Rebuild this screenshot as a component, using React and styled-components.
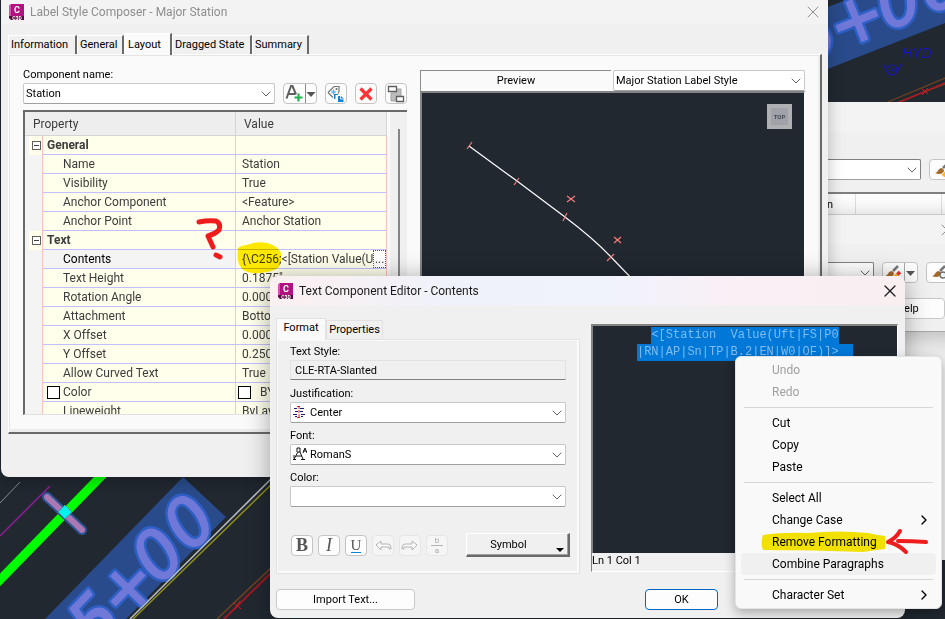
import React from "react";
import styled, { createGlobalStyle, css } from "styled-components";
import { ChevronDown, ChevronRight, X } from "lucide-react";

const GlobalStyle = createGlobalStyle`
  * {
    box-sizing: border-box;
  }

  body {
    margin: 0;
    background: #212830;
    color: #000;
    font-family: Roboto, "Noto Sans", sans-serif;
    font-size: 11px;
    line-height: 16px;
  }

  button, input, select {
    font: inherit;
    color: inherit;
    margin: 0;
  }
`;

const Desktop = styled.main`
  position: relative;
  min-height: 100vh;
  overflow: hidden;
`;

const Drawing = styled.svg`
  position: absolute;
  top: 0;
  left: 0;
  width: 100%;
  height: 100%;
`;

const Ink = styled(Drawing)`
  pointer-events: none;
  mix-blend-mode: ${(p) => (p.$marker ? "multiply" : "normal")};
`;

const Window = styled.section`
  position: absolute; // windows float freely on the desktop
  display: flex;
  flex-direction: column;
  background: #f0f0f0;
  overflow: hidden;
`;

const ComposerWindow = styled(Window)`
  top: 0;
  left: 1px;
  width: 827px;
  height: 477px;
  border-radius: 0 0 8px 8px;
  box-shadow: 0 4px 16px rgba(0, 0, 0, 0.25);
`;

const StylesWindow = styled(Window)`
  top: 102px;
  left: 720px;
  width: 320px;
  height: 458px;
`;

const PickerWindow = styled(Window)`
  top: 214px;
  left: 720px;
  width: 320px;
  height: 118px;
  border-top: 1px solid #c8c8c8;
  border-bottom: 1px solid #a8a8a8;
  box-shadow: 0 4px 24px rgba(0, 0, 0, 0.25);
`;

const EditorWindow = styled(Window)`
  top: 276px;
  left: 270px;
  width: 635px;
  height: 342px;
  border-radius: 8px;
  box-shadow: 0 2px 24px rgba(0, 0, 0, 0.35);
`;

const TitleBar = styled.header`
  display: flex;
  align-items: center;
  flex: none;
  height: ${(p) => p.$height || 30}px;
  padding: 0 5px 0 8px;
  gap: 6px;
  background: ${(p) => p.$background || "#f3f3f3"};
  color: ${(p) => (p.$active ? "#1b1b1b" : "#8e8e8e")};

  h1 {
    flex: 1;
    margin: 0;
    font-size: 12px;
    font-weight: 400;
  }
`;

const CloseButton = styled.button`
  display: flex;
  padding: 0;
  border: 0;
  background: none;
`;

const TabList = styled.div`
  display: flex;
  align-items: flex-end;
  position: relative;
  z-index: 1;
`;

const Tab = styled.button`
  height: 19px;
  padding: 0 2px;
  border: solid #fff;
  border-width: 1px 0 0 1px;
  border-right: 2px solid #696969;
  background: #f0f0f0;
  white-space: nowrap;
  text-align: left;
  width: ${(p) => p.$width}px;

  ${(p) =>
    p.$selected &&
    css`
      height: 22px;
      margin-bottom: -1px;
      padding-left: 3px;
      background: #fafafa;
    `}
`;

const FlatTab = styled(Tab)`
  padding: 0 0 ${(p) => (p.$selected ? 4 : 0)}px;
  border: 1px solid #e2e2e2;
  border-bottom: 0;
  text-align: center;
  background: ${(p) => (p.$selected ? "#fafafa" : "#f0f0f0")};
`;

const ComposerBody = styled.div`
  display: flex;
  flex-direction: column;
  flex: 1;
  min-height: 0;
  padding: 9px 6px 43px 7px;
`;

const ComposerPanel = styled.div`
  display: flex;
  flex: 1;
  min-height: 0;
  gap: 13px;
  padding: 12px 15px 17px 14px;
  background: #fafafa;
  border: 2px solid #696969;
  border-top: 1px solid #fff;
  border-left: 1px solid #fff;
  box-shadow: inset -2px -3px 0 #ececec, inset 1px 1px 0 #e4e4e4;
`;

const PropertyPane = styled.div`
  display: flex;
  flex-direction: column;
  width: 384px;
  min-height: 0;
`;

const Toolbar = styled.div`
  display: flex;
  align-items: center;
  gap: 8px;
  margin-bottom: 6px;
`;

const SelectBox = styled.span`
  position: relative;
  display: flex;
  flex: ${(p) => (p.$width ? "none" : 1)};
  width: ${(p) => (p.$width ? p.$width + "px" : "auto")};

  select {
    appearance: none;
    width: 100%;
    height: 21px;
    padding: 0 20px 0 ${(p) => p.$indent || 2}px;
    border: 1px solid ${(p) => p.$border || "#c8c8c8"};
    border-bottom-color: #a0a0a0;
    border-radius: 2px;
    background: #fff;
  }

  svg.chevron {
    position: absolute;
    right: 1px;
    top: 3px;
    pointer-events: none;
  }

  svg.lead {
    position: absolute;
    left: 3px;
    top: 3px;
  }
`;

const ToolButton = styled.button`
  display: flex;
  align-items: center;
  justify-content: center;
  flex: none;
  width: ${(p) => p.$width || 22}px;
  height: 21px;
  padding: 0;
  border: 1px solid ${(p) => (p.disabled ? "#e6e6e6" : "#c4c4c4")};
  border-radius: 4px;
  background: ${(p) => (p.disabled ? "#f5f5f5" : "#fdfdfd")};
`;

const GridFrame = styled.div`
  display: flex;
  flex: 1;
  min-height: 0;
  overflow: hidden;
  border: solid #696969;
  border-width: 2px 0 0 2px;
  border-bottom: 1px solid #e0e0e0;
  background: #fafafa;
`;

const Properties = styled.table`
  flex: none;
  align-self: flex-start;
  width: 362px;
  table-layout: fixed;
  border-collapse: separate;
  border-spacing: 0;
  font-size: 12px;
  color: #3c3c3c;

  th, td {
    height: 19px;
    padding: 0 0 0 6px;
    text-align: left;
    white-space: nowrap;
    font-weight: 400;
    line-height: 18px;
  }

  thead th {
    height: 24px;
    padding-left: 8px;
    background: #eee;
    border-right: 1px solid #d4d4d4;
    border-bottom: 1px solid #d4d4d4;
  }

  tbody th, tbody td {
    background: #ffffeb;
    border-right: 1px solid #ffc0c0;
    border-bottom: 1px solid #c0c0ff;
  }

  tbody th {
    padding-left: 20px;
  }
`;

const Row = styled.tr`
  && td:first-child {
    padding: 0 0 0 7px;
    border-bottom: 0;
    background: ${(p) => (p.$group ? "linear-gradient(90deg, #f4f4f4 4px, #ffffeb 4px)" : "#f4f4f4")};
  }

  ${(p) =>
    p.$group &&
    css`
      && th {
        padding-left: 4px;
        font-weight: 700;
      }
    `}

  ${(p) =>
    p.$current &&
    css`
      && th {
        background: #f4f4f4;
        color: #000;
      }
    `}
`;

const Collapse = styled.button`
  display: flex;
  align-items: center;
  justify-content: center;
  width: 9px;
  height: 9px;
  padding: 0;
  border: 1px solid #606060;
  background: #fff;

  &::before {
    content: "";
    width: 5px;
    height: 1px;
    background: #404040;
  }
`;

const Swatch = styled.span`
  display: inline-block;
  width: 13px;
  height: 13px;
  margin: 0 ${(p) => p.$gap || 3}px 0 ${(p) => (p.$gap ? -4 : -16)}px;
  border: 1px solid #000;
  background: #fff;
  vertical-align: middle;
`;

const ValueBox = styled.span`
  display: flex;
  justify-content: space-between;
`;

const MoreButton = styled.button`
  width: 17px;
  padding: 0;
  border: 1px dotted #555;
  background: #fff;
  line-height: 12px;
`;

const ScrollTrack = styled.div`
  flex: 1;
  padding: 17px 0 0 8px;
  margin-left: 3px;
  background: #f0f0f0;

  &::before {
    content: "";
    display: block;
    width: 2px;
    height: 100%;
    background: #858585;
  }
`;

const PreviewPane = styled.div`
  display: flex;
  flex-direction: column;
  flex: 1;
  padding-top: 3px;
`;

const PreviewHead = styled.div`
  display: flex;
  gap: 2px;
`;

const PreviewLabel = styled.div`
  flex: 1;
  border: solid #8c8c8c;
  border-width: 1px 0 0 1px;
  text-align: center;
  line-height: 20px;
`;

const Viewport = styled.div`
  position: relative;
  flex: 1;
  background: #212830;
  border: 2px solid #848484;
  border-right: 1px solid #fff;
  border-bottom: 1px solid #fff;
`;

const ViewCube = styled.button`
  position: absolute;
  top: 11px;
  right: 12px;
  width: 25px;
  height: 25px;
  padding: 0;
  border: 4px solid #aeb0b3;
  background: #9fa3a9;
  color: #454a52;
  font-size: 6px;
  font-weight: 700;
  line-height: 16px;
`;

const WhiteRow = styled.div`
  display: flex;
  height: 22px;
  border-top: 2px solid #808080;
  background: #fff;

  span {
    border-right: 1px solid #e0e0e0;
    line-height: 22px;
    text-align: right;
  }
`;

const BackRow = styled.div`
  display: flex;
  align-items: center;
  gap: 8px;
  padding: ${(p) => p.$pad};
`;

const PlainButton = styled.button`
  width: ${(p) => p.$width}px;
  height: 21px;
  padding: 0;
  border: 1px solid ${(p) => (p.$primary ? "#0067c0" : "#c8c8c8")};
  border-radius: 4px;
  background: #fdfdfd;
`;

const EditorBody = styled.div`
  display: grid;
  grid-template-columns: 304px 1fr;
  grid-template-rows: auto auto;
  column-gap: 11px;
  row-gap: 15px;
  padding: 12px 7px 9px 6px;
`;

const FormatPane = styled.div`
  display: flex;
  flex-direction: column;
`;

const FormatPanel = styled.div`
  display: flex;
  flex-direction: column;
  height: 235px;
  padding: 4px 13px 0 13px;
  border: 1px solid #e2e2e2;
  box-shadow: inset 1px 1px 0 #fafafa, inset -2px -2px 0 #fafafa;
`;

const Field = styled.div`
  display: flex;
  flex-direction: column;
  height: 42px;

  input {
    height: 20px;
    padding: 0 4px;
    border: 1px solid #e2e2e2;
    border-bottom-color: #808080;
    background: #f0f0f0;
  }
`;

const FormatTools = styled.div`
  display: flex;
  align-items: center;
  gap: 5px;
  margin: 21px 0 0 1px;
`;

const Glyph = styled.span`
  font-family: "Liberation Serif", serif;
  font-size: 18px;
  line-height: 18px;
  color: #555;
  font-weight: ${(p) => (p.$bold ? 700 : 400)};
  font-style: ${(p) => (p.$italic ? "italic" : "normal")};
`;

const UnderGlyph = styled(Glyph)`
  font-size: 15px;
  line-height: 14px;
  border-bottom: 1px solid #0a84d8;
`;

const Fraction = styled.span`
  display: flex;
  flex-direction: column;
  font-size: 8px;
  line-height: 9px;
  color: #a8a8a8;

  b {
    font-weight: 400;
    width: 12px;
    border-bottom: 1px solid #b4b4b4;
  }
`;

const SymbolButton = styled.button`
  position: relative;
  flex: 1;
  height: 24px;
  margin: 0 -4px 0 13px;
  padding: 0 18px 0 0;
  border: 2px solid #696969;
  border-top: 1px solid #fff;
  border-left: 1px solid #fff;
  background: #f0f0f0;
  box-shadow: inset -1px -1px 0 #a0a0a0;

  &::after {
    content: "";
    position: absolute;
    right: 4px;
    bottom: 3px;
    border: 4px solid transparent;
    border-top-color: #000;
    border-bottom: 0;
  }
`;

const TextPane = styled.div`
  display: flex;
  flex-direction: column;
  padding-top: 6px;
`;

const TextArea = styled.div`
  height: 229px;
  border: 2px solid #848484;
  border-right: 1px solid #fff;
  border-bottom: 0;
  background: #212830;
  color: #7fbcf2;
  font-family: "Liberation Mono", monospace;
  font-size: 12px;
  line-height: 17px;
  text-align: center;
  white-space: pre;
  padding-top: 1px;

  span {
    background: #0078d7;
    display: inline-block;
  }
`;

const Status = styled.div`
  height: 19px;
  border-left: 1px solid #808080;
  border-bottom: 1px solid #fff;
`;

const Menu = styled.div`
  position: absolute;
  top: 356px;
  left: 735px;
  width: 207px;
  padding: 2px 5px;
  border: 1px solid #e4e4e4;
  border-radius: 6px;
  background: #f9f9f9;
  box-shadow: 0 4px 12px rgba(0, 0, 0, 0.3);
  font-size: 12px;

  hr {
    height: 1px;
    margin: 4px 3px;
    border: 0;
    background: #d7d7d7;
  }
`;

const MenuItem = styled.button`
  display: flex;
  align-items: center;
  justify-content: space-between;
  width: 100%;
  height: 22px;
  padding: 0 4px 0 31px;
  border: 0;
  border-radius: 4px;
  background: ${(p) => (p.$hover ? "#f0f0f0" : "none")};
  white-space: nowrap;

  &:disabled {
    color: #a0a0a0;
  }
`;

const PROPERTIES = [
  { name: "General", group: true },
  { name: "Name", value: "Station" },
  { name: "Visibility", value: "True" },
  { name: "Anchor Component", value: "<Feature>" },
  { name: "Anchor Point", value: "Anchor Station" },
  { name: "Text", group: true },
  { name: "Contents", value: "{\\C256;<[Station Value(U...", current: true },
  { name: "Text Height", value: '0.1875"' },
  { name: "Rotation Angle", value: "0.0000 (d)" },
  { name: "Attachment", value: "Bottom center" },
  { name: "X Offset", value: '0.0000"' },
  { name: "Y Offset", value: '0.2500"' },
  { name: "Allow Curved Text", value: "True" },
  { name: "Color", value: "BYLAYER", swatch: true },
  { name: "Lineweight", value: "ByLayer" },
];

const MENU = [
  [{ text: "Undo", disabled: true }, { text: "Redo", disabled: true }],
  [{ text: "Cut" }, { text: "Copy" }, { text: "Paste" }],
  [
    { text: "Select All" },
    { text: "Change Case", more: true },
    { text: "Remove Formatting" },
    { text: "Combine Paragraphs", hover: true },
  ],
  [{ text: "Character Set", more: true }],
];

const AppIcon = () => (
  <svg width="15" height="17" viewBox="0 0 15 17" aria-hidden="true">
    <path d="M0 2l2-2h13v12H0z" fill="#b0127f" />
    <path d="M0 2l2-2v12H0z" fill="#e04bb4" />
    <path d="M0 12h15v4H2l-2-2z" fill="#5c0843" />
    <text x="8" y="9" fontSize="9" fontWeight="700" fill="#fff" textAnchor="middle">C</text>
    <text x="8" y="16" fontSize="5" fontWeight="700" fill="#fff" textAnchor="middle">C3D</text>
  </svg>
);

const AddTextIcon = () => (
  <svg width="32" height="19" viewBox="0 0 32 19" aria-hidden="true">
    <path d="M2.500 14.500L7 2h1.500l3.500 8.500M4.500 10h6.500" fill="none" stroke="#5f5f5f" strokeWidth="2" />
    <path d="M14.500 9.500v8M10.500 13.500h8" stroke="#22b14c" strokeWidth="2.200" />
    <path d="M21.500 0v19" stroke="#8a8a8a" />
    <path d="M22.500 8h9l-4.500 5z" fill="#555" />
  </svg>
);

const TagIcon = () => (
  <svg width="18" height="17" viewBox="0 0 18 17" aria-hidden="true">
    <path d="M1 7.500L7 1.500h5v5l-1 2M1 7.500l5 5" fill="none" stroke="#777" strokeWidth="1.200" />
    <circle cx="9.500" cy="4" r="1" fill="#666" />
    <path d="M4 7h5M6.500 4.500v5M5 5.500l3 3M8 5.500l-3 3" stroke="#4db2ee" />
    <path d="M7 9h4v1H8.500v4H7zM11 11h3l2.500 2.500V17H11z" fill="#1183d6" />
    <path d="M13.500 11v3h3" fill="none" stroke="#fff" strokeWidth="0.800" />
  </svg>
);

const DeleteIcon = () => (
  <svg width="16" height="16" viewBox="0 0 16 16" aria-hidden="true">
    <path d="M2.500 2.500l11 11M13.500 2.500l-11 11" stroke="#fb3535" strokeWidth="3.200" />
  </svg>
);

const ArrangeIcon = () => (
  <svg width="18" height="18" viewBox="0 0 18 18" aria-hidden="true">
    <path d="M8 4h6v8H9v4H4V8h4z" fill="#bdbdbd" stroke="#a4a4a4" />
    <path d="M1.500 1.500h8v5h-8zM9.500 11.500h7v5h-7z" fill="#fff" stroke="#5f5f5f" strokeWidth="1.300" />
  </svg>
);

const BrushIcon = ({ lens, arrow }) => (
  <svg width={arrow ? 34 : 20} height="19" viewBox={arrow ? "0 0 34 19" : "0 0 20 19"} aria-hidden="true">
    <path d="M2 13c3 0 3-5 7-5l2 2c0 4-5 5-9 3z" fill="#a46a2c" />
    <path d="M10 8l5-5" stroke="#777" strokeWidth="2.500" />
    {lens ? (
      <g fill="#e8f2f4" stroke="#6b6b6b" strokeWidth="1.300">
        <circle cx="13" cy="12" r="3" />
        <path d="M15 14l4 4" />
      </g>
    ) : (
      <path d="M10 16l5-5" stroke="#f5b52e" strokeWidth="3.500" />
    )}
    {!lens && <path d="M14.500 11.500l2.500-2.500" stroke="#ee3038" strokeWidth="3.500" />}
    {arrow && <path d="M21.500 0v19" stroke="#aaa" />}
    {arrow && <path d="M23 8h9l-4.500 5z" fill="#555" />}
  </svg>
);

const JustifyIcon = () => (
  <svg className="lead" width="12" height="14" viewBox="0 0 12 14" aria-hidden="true">
    <path d="M1 3.500h3M7 3.500h4M2 6.500h3M7 6.500h3M0 9.500h4M8 9.500h4M2 11.500h2M8 11.500h2" stroke="#1b1b70" />
    <path d="M6 1v12M4 1.500h4M4 12.500h4" stroke="#f02020" strokeDasharray="3 1" />
  </svg>
);

const FontIcon = () => (
  <svg className="lead" width="14" height="14" viewBox="0 0 14 14" aria-hidden="true">
    <path d="M1 12l4-7h2l3 7M3 9h6M0 12.500h3M8 12.500h4M4 5V1h3v4M10 6l2-5 2 5M10 4h3M1 8v3" fill="none" stroke="#111" />
  </svg>
);

const HistoryIcon = ({ redo }) => (
  <svg width="18" height="12" viewBox="0 0 18 12" aria-hidden="true">
    <path
      d={redo ? "M16 6l-5-4v3H4q-3 0-3 4v1h2V8h8v3z" : "M2 6l5-4v3h7q3 0 3 4v1h-2V8H7v3z"}
      fill="#fafafa"
      stroke="#b4b4b4"
    />
  </svg>
);

const Combo = ({ label, id, value, width, indent, border, children }) => (
  <SelectBox $width={width} $indent={indent} $border={border}>
    <select id={id} aria-label={label} defaultValue={value}>
      <option>{value}</option>
    </select>
    {children}
    <ChevronDown className="chevron" size={16} strokeWidth={1.5} color="#666" />
  </SelectBox>
);

const LABEL_PASSES = [
  { color: "#2d5fc4", width: 7 },
  { color: "#7078d8", width: 2 },
];

const StationLabel = ({ transform }) => (
  <g transform={transform} fontFamily="DejaVu Sans" fontStyle="italic" fontSize="66" textAnchor="middle">
    {LABEL_PASSES.map((pass) => (
      <text
        key={pass.color}
        x="0 46 91 136"
        fill={pass.color}
        stroke={pass.color}
        strokeWidth={pass.width}
        strokeLinejoin="round"
      >
        5+00
      </text>
    ))}
  </g>
);

// Plan drawing that stays visible around the open windows
const PlanDrawing = () => (
  <Drawing aria-hidden="true">
    <path d="M0 503L20 482" stroke="#8a8f96" />
    <path d="M0 536L50 486" stroke="#8c1c98" strokeWidth="1.500" />
    <path d="M-5 585L110 467" stroke="#0f0" strokeWidth="9" />
    <path d="M47 497L82 530" stroke="#2c5596" strokeWidth="10" strokeLinecap="round" />
    <path d="M47 497L82 530" stroke="#ab78b4" strokeWidth="6" strokeLinecap="round" />
    <path d="M65 505l7 7-7 7-7-7z" fill="#00f0f0" stroke="#478b8b" />
    <path d="M45 619L183 477L226 517L126 619z" fill="#294b8b" />
    <StationLabel transform="translate(111 636) rotate(-46)" />
    <path d="M130 619L272 478" stroke="#b9bcc0" strokeWidth="1.500" />
    <path d="M133 619L275 481" stroke="#8f8f1c" strokeWidth="1.500" />
    <path d="M217 619L275 564" stroke="#714420" strokeWidth="1.500" />
    <path d="M224 619L275 569" stroke="#a01820" strokeWidth="2" />
    <path d="M233 602l8 7M240 601l-6 9" stroke="#c02028" />
    <path d="M820 10L846 0H945V23L820 72z" fill="#294b8b" />
    <StationLabel transform="translate(822 57) rotate(-22)" />
    <text x="902" y="58" fontFamily="Liberation Sans" fontStyle="italic" fontSize="14" fill="#1818b8">
      HYD
    </text>
    <g fill="none" stroke="#1818b0" strokeWidth="1.200">
      <circle cx="892" cy="70" r="5" />
      <circle cx="892" cy="70" r="1" />
      <path d="M883 64l4 8M901 64l-4 8" />
    </g>
    <path d="M888 102L945 78M898 102L945 84" stroke="#714420" strokeWidth="1.200" />
    <path d="M900 102L945 83" stroke="#b01820" strokeWidth="1.500" />
    <path d="M922 89l6 5M928 88l-6 7" stroke="#d02028" />
  </Drawing>
);

const Composer = () => (
  <ComposerWindow>
    <TitleBar $height={24}>
      <AppIcon />
      <h1>Label Style Composer - Major Station</h1>
      <CloseButton aria-label="Close">
        <X size={20} strokeWidth={1.2} />
      </CloseButton>
    </TitleBar>
    <ComposerBody>
      <TabList role="tablist">
        <Tab role="tab" $width={69}>Information</Tab>
        <Tab role="tab" $width={47}>General</Tab>
        <Tab role="tab" $width={48} $selected aria-selected="true">Layout</Tab>
        <Tab role="tab" $width={80}>Dragged State</Tab>
        <Tab role="tab" $width={57}>Summary</Tab>
      </TabList>
      <ComposerPanel>
        <PropertyPane>
          <label htmlFor="component">Component name:</label>
          <Toolbar>
            <Combo id="component" value="Station" />
            <ToolButton $width={34} aria-label="Add component"><AddTextIcon /></ToolButton>
            <ToolButton aria-label="Copy component"><TagIcon /></ToolButton>
            <ToolButton aria-label="Delete component"><DeleteIcon /></ToolButton>
            <ToolButton aria-label="Component draw order"><ArrangeIcon /></ToolButton>
          </Toolbar>
          <GridFrame>
            <Properties>
              <colgroup>
                <col style={{ width: 18 }} />
                <col style={{ width: 193 }} />
                <col />
              </colgroup>
              <thead>
                <tr>
                  <th colSpan={2}>Property</th>
                  <th>Value</th>
                </tr>
              </thead>
              <tbody>
                {PROPERTIES.map((item) => (
                  <Row key={item.name} $group={item.group} $current={item.current}>
                    <td>{item.group && <Collapse aria-label={"Collapse " + item.name} />}</td>
                    <th scope="row">
                      {item.swatch && <Swatch />}
                      {item.name}
                    </th>
                    <td>
                      {item.current ? (
                        <ValueBox>
                          {item.value.slice(0, -3)}
                          <MoreButton>...</MoreButton>
                        </ValueBox>
                      ) : (
                        <>
                          {item.swatch && <Swatch $gap={9} />}
                          {item.value}
                        </>
                      )}
                    </td>
                  </Row>
                ))}
              </tbody>
            </Properties>
            <ScrollTrack />
          </GridFrame>
        </PropertyPane>
        <PreviewPane>
          <PreviewHead>
            <PreviewLabel>Preview</PreviewLabel>
            <Combo label="Preview style" value="Major Station Label Style" width={192} />
          </PreviewHead>
          <Viewport>
            <Drawing aria-hidden="true">
              <path d="M47 53L95 88L143 124Q172 146 189 164L215 191" fill="none" stroke="#fff" strokeWidth="1.200" />
              <path
                d="M45 56l5-7M92 92l5-7M141 128l4-8M185 168l7-7M145 103l8 6M145 109l8-6M192 144l7 6M192 150l7-6"
                stroke="#f47c7c"
                strokeWidth="1.200"
              />
            </Drawing>
            <ViewCube>TOP</ViewCube>
          </Viewport>
        </PreviewPane>
      </ComposerPanel>
    </ComposerBody>
  </ComposerWindow>
);

const BackWindows = () => (
  <>
    <StylesWindow>
      <TitleBar />
      <BackRow $pad="27px 0 12px 12px">
        <Combo label="Style" value="" width={189} border="#808080" />
        <ToolButton $width={28} aria-label="Edit style"><BrushIcon /></ToolButton>
      </BackRow>
      <WhiteRow>
        <span style={{ width: 136, paddingRight: 22 }}>n</span>
        <span style={{ width: 86 }} />
      </WhiteRow>
    </StylesWindow>
    <PickerWindow>
      <TitleBar>
        <h1 />
        <CloseButton aria-label="Close" style={{ marginRight: 78 }}>
          <X size={20} strokeWidth={1.2} />
        </CloseButton>
      </TitleBar>
      <BackRow $pad="17px 0 15px 12px">
        <Combo label="Style picker" value="" width={142} border="#808080" />
        <ToolButton $width={36} aria-label="Edit selection"><BrushIcon arrow /></ToolButton>
        <ToolButton $width={28} aria-label="Pick from drawing"><BrushIcon lens /></ToolButton>
      </BackRow>
      <BackRow $pad="0 0 0 150px">
        <PlainButton $width={75}>Help</PlainButton>
      </BackRow>
    </PickerWindow>
  </>
);

const ComponentEditor = () => (
  <EditorWindow>
    <TitleBar $active $background="linear-gradient(90deg, #fbf0f0, #eff2fb 30%, #f0f3fc 52%, #faeff5 75%, #f9eff1)">
      <AppIcon />
      <h1>Text Component Editor - Contents</h1>
      <CloseButton aria-label="Close">
        <X size={20} strokeWidth={1.5} />
      </CloseButton>
    </TitleBar>
    <EditorBody>
      <FormatPane>
        <TabList role="tablist">
          <FlatTab role="tab" $width={50} $selected aria-selected="true">Format</FlatTab>
          <FlatTab role="tab" $width={57}>Properties</FlatTab>
        </TabList>
        <FormatPanel>
          <Field>
            <label htmlFor="text-style">Text Style:</label>
            <input id="text-style" readOnly value="CLE-RTA-Slanted" />
          </Field>
          <Field>
            <label htmlFor="justification">Justification:</label>
            <Combo id="justification" value="Center" indent={19}><JustifyIcon /></Combo>
          </Field>
          <Field>
            <label htmlFor="font">Font:</label>
            <Combo id="font" value="RomanS" indent={19}><FontIcon /></Combo>
          </Field>
          <Field>
            <label htmlFor="color">Color:</label>
            <Combo id="color" value="" />
          </Field>
          <FormatTools>
            <ToolButton aria-label="Bold"><Glyph $bold>B</Glyph></ToolButton>
            <ToolButton aria-label="Italic"><Glyph $italic>I</Glyph></ToolButton>
            <ToolButton aria-label="Underline"><UnderGlyph>U</UnderGlyph></ToolButton>
            <ToolButton disabled aria-label="Undo"><HistoryIcon /></ToolButton>
            <ToolButton disabled aria-label="Redo"><HistoryIcon redo /></ToolButton>
            <ToolButton disabled aria-label="Stack"><Fraction><b>b</b>a</Fraction></ToolButton>
            <SymbolButton>Symbol</SymbolButton>
          </FormatTools>
        </FormatPanel>
      </FormatPane>
      <TextPane>
        <TextArea role="textbox" aria-label="Contents" contentEditable suppressContentEditableWarning>
          <span>{"<[Station  Value(Uft|FS|P0"}</span>
          <br />
          <span>{"|RN|AP|Sn|TP|B.2|EN|W0|OF)]>  "}</span>
        </TextArea>
        <Status>Ln 1 Col 1</Status>
      </TextPane>
      <PlainButton $width={139}>Import Text...</PlainButton>
      <div style={{ paddingLeft: 54 }}>
        <PlainButton $width={73} $primary>OK</PlainButton>
      </div>
    </EditorBody>
  </EditorWindow>
);

const ContextMenu = () => (
  <Menu role="menu">
    {MENU.map((section, i) => (
      <React.Fragment key={i}>
        {i > 0 && <hr />}
        {section.map((item) => (
          <MenuItem key={item.text} role="menuitem" disabled={item.disabled} $hover={item.hover}>
            {item.text}
            {item.more && <ChevronRight size={16} strokeWidth={2} />}
          </MenuItem>
        ))}
      </React.Fragment>
    ))}
  </Menu>
);

const App = () => (
  <>
    <GlobalStyle />
    <Desktop>
      <PlanDrawing />
      <BackWindows />
      <Composer />
      <ComponentEditor />
      <ContextMenu />
      <Ink $marker aria-hidden="true">
        <path d="M238 248q4-3 9-3q10-4 20-2q11 3 14 10q1 10-3 15q-6 4-18 5q-12 1-18-4q-6-7-4-21z" fill="#ffe800" />
        <path d="M763 535q20-3 45-2q30-3 60 0q8 2 17 3v13q-10 1-22 3q-50-2-100-2q-3-7 0-15z" fill="#f8e600" />
      </Ink>
      <Ink fill="none" stroke="#ee1c1c" strokeWidth="5" strokeLinecap="round" strokeLinejoin="round" aria-hidden="true">
        <path d="M199 222q9-2 17-1q5 2 3 9q-4 4-11 6l5 11M216 255l4 2" />
        <path d="M900 531q-4 7-12 11q10 2 18 10M898 541q14 0 28 1" strokeWidth="4" />
      </Ink>
    </Desktop>
  </>
);

export default App;
